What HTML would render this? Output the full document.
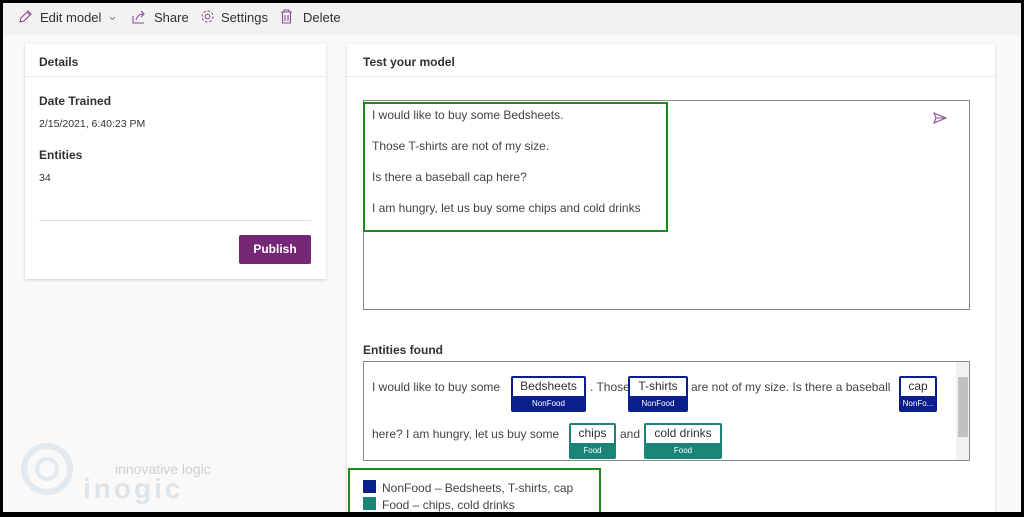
<!DOCTYPE html><html><head><style>
*{box-sizing:border-box;margin:0;padding:0}
body{width:1024px;height:517px;overflow:hidden;background:#000;font-family:"Liberation Sans",sans-serif;color:#323130;position:relative}
#f{position:absolute;left:3px;top:3px;width:1018px;height:509px;background:#faf9f8;overflow:hidden}
.a{position:absolute}
.tb{left:0;top:0;width:1018px;height:32px;background:#f3f2f1;font-size:13px;color:#323130}
.tb span{position:absolute;top:7px}
.card{background:#fff;box-shadow:0 1px 3px rgba(0,0,0,.18)}
.tag{position:absolute;height:36px;border:2px solid #0b1f8c;border-radius:2px;background:#0b1f8c;font-size:12px;text-align:center}
.tag b{display:block;background:#fff;height:18px;line-height:17px;font-weight:normal;color:#323130}
.tag i{display:block;color:#fff;font-style:normal;font-size:8px;line-height:15px}
.fd{border-color:#1a8577;background:#1a8577}
</style></head><body><div id="f">
<div class="a tb">
<svg class="a" style="left:15px;top:7px" width="14" height="14" viewBox="0 0 14 14"><path d="M2 12l1-4 7-7 3 3-7 7zM9 2l3 3" fill="none" stroke="#8a4a9a" stroke-width="1.1"/></svg>
<span style="left:37px">Edit model</span><span style="left:104px;top:5px;color:#888">&#8964;</span>
<svg class="a" style="left:129px;top:7px" width="15" height="14" viewBox="0 0 15 14"><path d="M1 6v7h11M4 10c1-4 4-6 8-6M9 1l3 3-3 3" fill="none" stroke="#8a4a9a" stroke-width="1.1"/></svg>
<span style="left:151px">Share</span>
<svg class="a" style="left:197px;top:6px" width="15" height="15" viewBox="0 0 15 15"><circle cx="7.5" cy="7.5" r="2.3" fill="none" stroke="#8a4a9a"/><circle cx="7.5" cy="7.5" r="5.5" fill="none" stroke="#8a4a9a" stroke-dasharray="2.5 1.8"/></svg>
<span style="left:218px">Settings</span>
<svg class="a" style="left:277px;top:6px" width="13" height="15" viewBox="0 0 13 15"><path d="M1 3h11M4 3V1h5v2M2.5 3v11h8V3M5 6v6M8 6v6" fill="none" stroke="#8a4a9a" stroke-width="1.1"/></svg>
<span style="left:300px">Delete</span>
</div>
<div class="a card" style="left:22px;top:41px;width:301px;height:235px">
<div class="a" style="left:14px;top:11px;font-size:12px;font-weight:bold">Details</div>
<div class="a" style="left:0;top:32px;width:301px;height:1px;background:#edebe9"></div>
<div class="a" style="left:14px;top:50px;font-size:12px;font-weight:bold">Date Trained</div>
<div class="a" style="left:14px;top:74px;font-size:10.5px">2/15/2021, 6:40:23 PM</div>
<div class="a" style="left:14px;top:104px;font-size:12px;font-weight:bold">Entities</div>
<div class="a" style="left:14px;top:128px;font-size:10.5px">34</div>
<div class="a" style="left:14px;top:176px;width:272px;height:1px;background:#e1dfdd"></div>
<div class="a" style="left:214px;top:191px;width:72px;height:29px;background:#742774;color:#fff;font-size:12px;font-weight:bold;text-align:center;line-height:29px;border-radius:2px">Publish</div>
</div>
<div class="a card" style="left:344px;top:41px;width:648px;height:480px">
<div class="a" style="left:16px;top:11px;font-size:12px;font-weight:bold">Test your model</div>
<div class="a" style="left:0;top:32px;width:648px;height:1px;background:#edebe9"></div>
<div class="a" style="left:16px;top:56px;width:607px;height:210px;border:1px solid #8a8886"></div>
<svg class="a" style="left:586px;top:68px" width="14" height="12" viewBox="0 0 14 12"><path d="M1 1l12 5-12 5 2-5zM3 6h10" fill="none" stroke="#8a4a9a" stroke-width="1.1"/></svg>
<div class="a" style="left:16px;top:58px;width:305px;height:130px;border:2px solid #1e8a1e;font-size:12px;line-height:31px;padding:0 0 0 7px;margin-top:0;color:#444"><div style="margin-top:-4px">I would like to buy some Bedsheets.<br>Those T-shirts are not of my size.<br>Is there a baseball cap here?<br>I am hungry, let us buy some chips and cold drinks</div></div>
<div class="a" style="left:16px;top:299px;font-size:12px;font-weight:bold">Entities found</div>
<div class="a" style="left:16px;top:317px;width:607px;height:100px;border:1px solid #8a8886;font-size:12px;color:#444">
<div class="a" style="right:0;top:0;width:13px;height:98px;background:#f1f1f1"><div class="a" style="left:2px;top:15px;width:10px;height:60px;background:#c1c1c1"></div></div>
<div class="a" style="left:8px;top:18px">I would like to buy some</div>
<div class="tag" style="left:147px;top:14px;width:75px"><b>Bedsheets</b><i>NonFood</i></div>
<div class="a" style="left:226px;top:18px">. Those</div>
<div class="tag" style="left:264px;top:14px;width:60px"><b>T-shirts</b><i>NonFood</i></div>
<div class="a" style="left:327px;top:18px">are not of my size. Is there a baseball</div>
<div class="tag" style="left:535px;top:14px;width:38px"><b>cap</b><i>NonFo...</i></div>
<div class="a" style="left:8px;top:65px">here? I am hungry, let us buy some</div>
<div class="tag fd" style="left:205px;top:61px;width:47px"><b>chips</b><i>Food</i></div>
<div class="a" style="left:256px;top:65px">and</div>
<div class="tag fd" style="left:280px;top:61px;width:78px"><b>cold drinks</b><i>Food</i></div>
</div>
</div>
<div class="a" style="left:345px;top:465px;width:253px;height:60px;border:2px solid #1e8a1e;font-size:12px;color:#444">
<div class="a" style="left:13px;top:10px;width:13px;height:13px;background:#0b1f8c"></div><div class="a" style="left:32px;top:11px">NonFood – Bedsheets, T-shirts, cap</div>
<div class="a" style="left:13px;top:27px;width:13px;height:13px;background:#1a8577"></div><div class="a" style="left:32px;top:28px">Food – chips, cold drinks</div>
</div>
<div class="a" style="left:18px;top:440px;width:52px;height:52px;border-radius:50%;border:6px solid #dde6ec;opacity:.8"></div>
<div class="a" style="left:32px;top:454px;width:24px;height:24px;border-radius:50%;border:4px solid #dde6ec;opacity:.8"></div>
<div class="a" style="left:112px;top:458px;font-size:14px;color:#c9d2d8">innovative logic</div>
<div class="a" style="left:80px;top:470px;font-size:28px;font-weight:bold;color:#dde4ea;letter-spacing:3px">inogic</div>
</div></body></html>
